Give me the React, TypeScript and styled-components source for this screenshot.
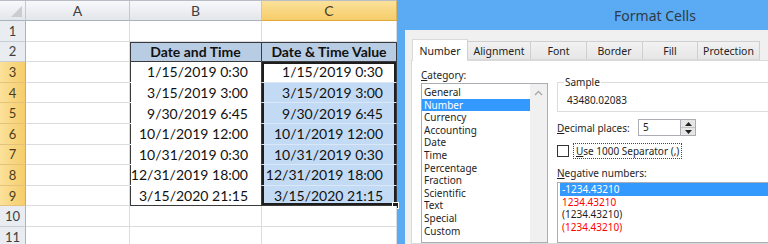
import styled, { createGlobalStyle } from "styled-components"

const GlobalStyle = createGlobalStyle`
  html, body {
    margin: 0;
    padding: 0;
    background: #ffffff;
    overflow: hidden;
  }
  #root {
    width: 768px;
    height: 244px;
    overflow: hidden;
  }
`

const sheetRows = [
  { b: "", c: "" },
  { b: "Date and Time", c: "Date & Time Value" },
  { b: "1/15/2019 0:30", c: "1/15/2019 0:30" },
  { b: "3/15/2019 3:00", c: "3/15/2019 3:00" },
  { b: "9/30/2019 6:45", c: "9/30/2019 6:45" },
  { b: "10/1/2019 12:00", c: "10/1/2019 12:00" },
  { b: "10/31/2019 0:30", c: "10/31/2019 0:30" },
  { b: "12/31/2019 18:00", c: "12/31/2019 18:00" },
  { b: "3/15/2020 21:15", c: "3/15/2020 21:15" },
  { b: "", c: "" },
  { b: "", c: "" },
]

const tabs = [
  { name: "Number", width: 56 },
  { name: "Alignment", width: 64 },
  { name: "Font", width: 57 },
  { name: "Border", width: 57 },
  { name: "Fill", width: 56 },
  { name: "Protection", width: 63 },
]

const categories = [
  "General", "Number", "Currency", "Accounting", "Date", "Time",
  "Percentage", "Fraction", "Scientific", "Text", "Special", "Custom",
]

const negatives = [
  { text: "-1234.43210", red: false },
  { text: "1234.43210", red: true },
  { text: "(1234.43210)", red: false },
  { text: "(1234.43210)", red: true },
]

export default function App() {
  return (
    <>
      <GlobalStyle />
      <Page>
        <Sheet>
          <Corner />
          <ColHead>A</ColHead>
          <ColHead>B</ColHead>
          <ColHead $active>C</ColHead>

          {sheetRows.map((row, i) => {
            const n = i + 1
            const inTable = n >= 2 && n <= 9
            const selected = n >= 3 && n <= 9
            const line = n === 2 || n === 9 ? "dark" : inTable ? "hidden" : undefined
            return [
              <RowHead key={`h${n}`} $active={selected}>{n}</RowHead>,
              <Cell key={`a${n}`} />,
              <Cell
                key={`b${n}`}
                $table={inTable}
                $line={line}
                $tableTop={n === 2}
                $tableLeft={inTable}
                $fill={n === 2 ? "head" : undefined}
                $bold={n === 2}
                $center={n === 2}
              >
                {row.b}
              </Cell>,
              <Cell
                key={`c${n}`}
                $table={inTable}
                $line={line === "hidden" ? "soft" : line}
                $tableTop={n === 2}
                $fill={n === 2 ? "head" : selected && n > 3 ? "sel" : undefined}
                $bold={n === 2}
                $center={n === 2}
                $sel={selected}
                $selTop={n === 3}
                $selBottom={n === 9}
              >
                {row.c}
              </Cell>,
            ]
          })}
        </Sheet>

        <Dialog>
          <TitleBar>Format Cells</TitleBar>
          <DialogBody>
            <TabStrip>
              {tabs.map((t) => (
                <Tab key={t.name} $active={t.name === "Number"} $width={t.width}>
                  {t.name}
                </Tab>
              ))}
            </TabStrip>

            <TabPanel>
              <CategoryColumn>
                <FieldLabel><u>C</u>ategory:</FieldLabel>
                <CategoryList>
                  <ListItems>
                    {categories.map((c) => (
                      <ListItem key={c} $selected={c === "Number"}>{c}</ListItem>
                    ))}
                  </ListItems>
                  <ScrollTrack>
                    <svg width="9" height="6" viewBox="0 0 9 6">
                      <path d="M1 5 L4.5 1.5 L8 5" fill="none" stroke="#a6a6a6" strokeWidth="1.3" />
                    </svg>
                  </ScrollTrack>
                </CategoryList>
              </CategoryColumn>

              <OptionsColumn>
                <SampleBox>
                  <SampleLegend>Sample</SampleLegend>
                  <SampleValue>43480.02083</SampleValue>
                </SampleBox>

                <DecimalRow>
                  <DecimalLabel><u>D</u>ecimal places:</DecimalLabel>
                  <NumberBox>5</NumberBox>
                  <Spinner>
                    <SpinButton>
                      <svg width="7" height="4" viewBox="0 0 7 4"><path d="M0 4 L3.5 0 L7 4 Z" fill="#222" /></svg>
                    </SpinButton>
                    <SpinButton>
                      <svg width="7" height="4" viewBox="0 0 7 4"><path d="M0 0 L3.5 4 L7 0 Z" fill="#222" /></svg>
                    </SpinButton>
                  </Spinner>
                </DecimalRow>

                <CheckRow>
                  <CheckBox />
                  <FocusLabel><u>U</u>se 1000 Separator (,)</FocusLabel>
                </CheckRow>

                <NegativeLabel><u>N</u>egative numbers:</NegativeLabel>
                <NegativeList>
                  {negatives.map((n, i) => (
                    <NegativeItem key={i} $selected={i === 0} $red={n.red}>{n.text}</NegativeItem>
                  ))}
                </NegativeList>
              </OptionsColumn>
            </TabPanel>
          </DialogBody>
        </Dialog>
      </Page>
    </>
  )
}

const Page = styled.div`
  display: flex;
  width: 768px;
  height: 244px;
  overflow: hidden;
`

const Sheet = styled.div`
  flex-shrink: 0;
  width: 397px;
  display: grid;
  grid-template-columns: 26px 104px 132px 135px;
  grid-template-rows: 20px;
  grid-auto-rows: 20.6px;
  font-family: Lato, "Liberation Sans", sans-serif;
  border-top: 1px solid #b9bec6;
  box-sizing: border-box;
`

const Corner = styled.div`
  position: relative;
  background: linear-gradient(#f7f8fa, #e3e6ea);
  border-right: 1px solid #c3c8cf;
  border-bottom: 1px solid #aab2bd;
  &::after {
    content: "";
    position: absolute;
    right: 3px;
    bottom: 3px;
    border-style: solid;
    border-width: 0 0 11px 11px;
    border-color: transparent transparent #c9ccd1 transparent;
  }
`

const ColHead = styled.div<{ $active?: boolean }>`
  display: flex;
  align-items: center;
  justify-content: center;
  font-size: 14px;
  color: ${(p) => (p.$active ? "#4a3c1c" : "#3e3e3e")};
  background: ${(p) =>
    p.$active ? "linear-gradient(#fbe19a, #f6cd6a)" : "linear-gradient(#f7f8fa, #e3e6ea)"};
  border-right: 1px solid ${(p) => (p.$active ? "#d9b45a" : "#c3c8cf")};
  border-bottom: 1px solid ${(p) => (p.$active ? "#e0a839" : "#aab2bd")};
`

const RowHead = styled.div<{ $active?: boolean }>`
  display: flex;
  align-items: center;
  justify-content: center;
  font-size: 13px;
  color: ${(p) => (p.$active ? "#4a3c1c" : "#3e3e3e")};
  background: ${(p) => (p.$active ? "linear-gradient(90deg, #fbe19a, #f6cd6a)" : "#e9ecf0")};
  border-right: 1px solid ${(p) => (p.$active ? "#e0a839" : "#aab2bd")};
  border-bottom: 1px solid ${(p) => (p.$active ? "#e4c27a" : "#c8cdd4")};
`

type CellProps = {
  $table?: boolean
  $line?: "dark" | "hidden" | "soft"
  $tableTop?: boolean
  $tableLeft?: boolean
  $fill?: "head" | "sel"
  $bold?: boolean
  $center?: boolean
  $sel?: boolean
  $selTop?: boolean
  $selBottom?: boolean
}

const cellShadow = (p: CellProps) => {
  const s: string[] = []
  if (p.$tableTop) s.push("inset 0 1px 0 #3a3a3a")
  if (p.$tableLeft) s.push("inset 1px 0 0 #3a3a3a")
  if (p.$sel) s.push("inset 2px 0 0 #1e1e1e", "inset -2px 0 0 #1e1e1e")
  if (p.$selTop) s.push("inset 0 2px 0 #1e1e1e")
  if (p.$selBottom) s.push("inset 0 -2px 0 #1e1e1e")
  return s.length ? s.join(", ") : "none"
}

const lineColors = {
  dark: "#3a3a3a",
  hidden: "#ffffff",
  soft: "#d9e7f8",
}

const Cell = styled.div<CellProps>`
  position: relative;
  display: flex;
  align-items: center;
  justify-content: ${(p) => (p.$center ? "center" : "flex-end")};
  padding-right: ${(p) => (p.$center ? "0" : "13px")};
  font-size: 14px;
  font-weight: ${(p) => (p.$bold ? 700 : 400)};
  color: #111;
  white-space: nowrap;
  background: ${(p) => (p.$fill === "head" ? "#b8cce4" : p.$fill === "sel" ? "#c3daf5" : "#ffffff")};
  border-right: 1px solid ${(p) => (p.$table ? "#3a3a3a" : "#dadcdf")};
  border-bottom: 1px solid ${(p) => (p.$line ? lineColors[p.$line] : "#dadcdf")};
  box-shadow: ${cellShadow};

  ${(p) =>
    p.$selBottom &&
    `
    &::after {
      content: "";
      position: absolute;
      right: -3px;
      bottom: -4px;
      width: 5px;
      height: 5px;
      background: #1e1e1e;
      border: 1px solid #ffffff;
    }
  `}
`

const Dialog = styled.div`
  flex-shrink: 0;
  width: 516px;
  display: flex;
  flex-direction: column;
  background: #5aabf3;
  font-family: "Noto Sans", "Open Sans", sans-serif;
  color: #1e1e1e;
`

const TitleBar = styled.div`
  height: 30px;
  display: flex;
  align-items: center;
  justify-content: center;
  font-size: 14px;
  color: #2f3a46;
`

const DialogBody = styled.div`
  flex: 1;
  margin-left: 8px;
  background: #f0f0f0;
  padding-top: 8px;
  display: flex;
  flex-direction: column;
`

const TabStrip = styled.div`
  height: 22px;
  display: flex;
  align-items: flex-end;
  padding-left: 7px;
  position: relative;
  z-index: 1;
`

const Tab = styled.div<{ $active?: boolean; $width: number }>`
  box-sizing: border-box;
  width: ${(p) => p.$width}px;
  height: ${(p) => (p.$active ? 22 : 19)}px;
  margin-bottom: ${(p) => (p.$active ? -1 : 0)}px;
  display: flex;
  align-items: center;
  justify-content: center;
  font-size: 10.5px;
  color: #222;
  background: ${(p) => (p.$active ? "#ffffff" : "linear-gradient(#f2f2f2, #e6e6e6)")};
  border: 1px solid ${(p) => (p.$active ? "#d9d9d9" : "#cfcfcf")};
  border-bottom: ${(p) => (p.$active ? "none" : "1px solid #d9d9d9")};
  & + & {
    margin-left: -1px;
  }
`

const TabPanel = styled.div`
  flex: 1;
  margin-left: 6px;
  background: #ffffff;
  border: 1px solid #d9d9d9;
  display: flex;
  padding: 8px 0 0 9px;
  gap: 9px;
  font-size: 10px;
`

const CategoryColumn = styled.div`
  width: 127px;
  display: flex;
  flex-direction: column;
`

const FieldLabel = styled.div`
  line-height: 13px;
  margin-bottom: 1px;
`

const CategoryList = styled.div`
  flex: 1;
  display: flex;
  border: 1px solid #abadb3;
  background: #ffffff;
`

const ListItems = styled.div`
  flex: 1;
  padding-top: 2px;
`

const ListItem = styled.div<{ $selected?: boolean }>`
  height: 12.6px;
  line-height: 12.6px;
  padding-left: 2px;
  white-space: nowrap;
  color: ${(p) => (p.$selected ? "#ffffff" : "#1e1e1e")};
  background: ${(p) => (p.$selected ? "#3399ff" : "transparent")};
`

const ScrollTrack = styled.div`
  width: 17px;
  background: #f0f0f0;
  display: flex;
  justify-content: center;
  padding-top: 6px;
  box-sizing: border-box;
`

const OptionsColumn = styled.div`
  flex: 1;
  display: flex;
  flex-direction: column;
  padding-top: 7px;
`

const SampleBox = styled.fieldset`
  margin: 0;
  padding: 0 9px 4px 9px;
  border: 1px solid #dcdcdc;
  height: 36px;
  box-sizing: border-box;
`

const SampleLegend = styled.legend`
  margin-left: -3px;
  padding: 0 1px;
  line-height: 13px;
`

const SampleValue = styled.div`
  line-height: 13px;
  padding-top: 5px;
`

const DecimalRow = styled.div`
  display: flex;
  align-items: center;
  height: 17px;
  margin-top: 7px;
`

const DecimalLabel = styled.div`
  width: 81px;
`

const NumberBox = styled.div`
  box-sizing: border-box;
  width: 42px;
  height: 17px;
  border: 1px solid #abadb3;
  border-right: none;
  padding-left: 4px;
  line-height: 15px;
`

const Spinner = styled.div`
  width: 16px;
  height: 17px;
  display: flex;
  flex-direction: column;
  border: 1px solid #abadb3;
  box-sizing: border-box;
`

const SpinButton = styled.div`
  flex: 1;
  display: flex;
  align-items: center;
  justify-content: center;
  background: #e6e6e6;
  & + & {
    border-top: 1px solid #c4c4c4;
  }
`

const CheckRow = styled.div`
  display: flex;
  align-items: center;
  height: 16px;
  margin-top: 7px;
`

const CheckBox = styled.div`
  width: 12px;
  height: 12px;
  box-sizing: border-box;
  border: 1px solid #333;
  background: #ffffff;
`

const FocusLabel = styled.div`
  margin-left: 4px;
  padding: 0 2px;
  line-height: 14px;
  border: 1px dotted #444;
`

const NegativeLabel = styled.div`
  line-height: 13px;
  margin-top: 8px;
`

const NegativeList = styled.div`
  flex: 1;
  margin-top: 2px;
  border: 1px solid #abadb3;
  padding: 0 0 0 2px;
  background: #ffffff;
`

const NegativeItem = styled.div<{ $selected?: boolean; $red?: boolean }>`
  height: 12.7px;
  line-height: 12.7px;
  padding-left: 2px;
  color: ${(p) => (p.$selected ? "#ffffff" : p.$red ? "#ff0000" : "#1e1e1e")};
  background: ${(p) => (p.$selected ? "#3399ff" : "transparent")};
`
